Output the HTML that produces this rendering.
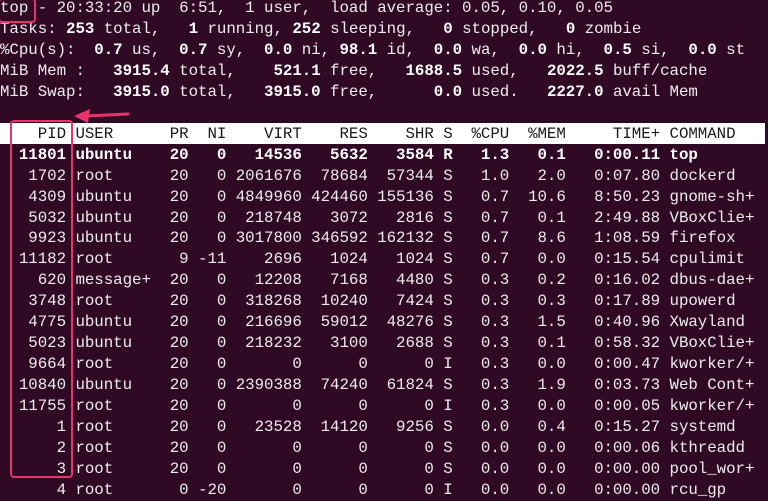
<!DOCTYPE html>
<html><head><meta charset="utf-8"><style>
html,body{margin:0;padding:0;}
body{width:768px;height:485px;background:#300a24;overflow:hidden;position:relative;}
pre{position:absolute;left:0;top:-2px;margin:0;font-family:"Liberation Mono",monospace;font-size:15.8px;line-height:20.95px;color:#ececec;letter-spacing:-0.05px;}
b{color:#fff;}
.hdr{position:absolute;left:0;top:123px;width:765px;height:21px;background:#fff;}
.h{color:#1a1a1a;}
.box{position:absolute;border:2px solid #e8336b;border-radius:4px;}
</style></head><body>
<div class="hdr"></div>
<pre>top - 20:33:20 up  6:51,  1 user,  load average: 0.05, 0.10, 0.05
Tasks: <b>253</b> total,   <b>1</b> running, <b>252</b> sleeping,   <b>0</b> stopped,   <b>0</b> zombie
%Cpu(s):  <b>0.7</b> us,  <b>0.7</b> sy,  <b>0.0</b> ni, <b>98.1</b> id,  <b>0.0</b> wa,  <b>0.0</b> hi,  <b>0.5</b> si,  <b>0.0</b> st
MiB Mem :   <b>3915.4</b> total,    <b>521.1</b> free,   <b>1688.5</b> used,   <b>2022.5</b> buff/cache
MiB Swap:   <b>3915.0</b> total,   <b>3915.0</b> free,      <b>0.0</b> used.   <b>2227.0</b> avail Mem

<span class="h">    PID USER      PR  NI    VIRT    RES    SHR S  %CPU  %MEM     TIME+ COMMAND</span>
<b>  11801 ubuntu    20   0   14536   5632   3584 R   1.3   0.1   0:00.11 top</b>
   1702 root      20   0 2061676  78684  57344 S   1.0   2.0   0:07.80 dockerd
   4309 ubuntu    20   0 4849960 424460 155136 S   0.7  10.6   8:50.23 gnome-sh+
   5032 ubuntu    20   0  218748   3072   2816 S   0.7   0.1   2:49.88 VBoxClie+
   9923 ubuntu    20   0 3017800 346592 162132 S   0.7   8.6   1:08.59 firefox
  11182 root       9 -11    2696   1024   1024 S   0.7   0.0   0:15.54 cpulimit
    620 message+  20   0   12208   7168   4480 S   0.3   0.2   0:16.02 dbus-dae+
   3748 root      20   0  318268  10240   7424 S   0.3   0.3   0:17.89 upowerd
   4775 ubuntu    20   0  216696  59012  48276 S   0.3   1.5   0:40.96 Xwayland
   5023 ubuntu    20   0  218232   3100   2688 S   0.3   0.1   0:58.32 VBoxClie+
   9664 root      20   0       0      0      0 I   0.3   0.0   0:00.47 kworker/+
  10840 ubuntu    20   0 2390388  74240  61824 S   0.3   1.9   0:03.73 Web Cont+
  11755 root      20   0       0      0      0 I   0.3   0.0   0:00.05 kworker/+
      1 root      20   0   23528  14120   9256 S   0.0   0.4   0:15.27 systemd
      2 root      20   0       0      0      0 S   0.0   0.0   0:00.06 kthreadd
      3 root      20   0       0      0      0 S   0.0   0.0   0:00.00 pool_wor+
      4 root       0 -20       0      0      0 I   0.0   0.0   0:00.00 rcu_gp</pre>
<div class="box" style="left:-2px;top:-2px;width:34px;height:21px;"></div>
<div class="box" style="left:10px;top:120px;width:59px;height:354px;"></div>
<svg style="position:absolute;left:0;top:0" width="768" height="485">
<line x1="128" y1="114" x2="86" y2="116" stroke="#e8336b" stroke-width="3" stroke-linecap="round"/>
<polygon points="74,116 90,109 88,123" fill="#e8336b"/>
</svg>
</body></html>
